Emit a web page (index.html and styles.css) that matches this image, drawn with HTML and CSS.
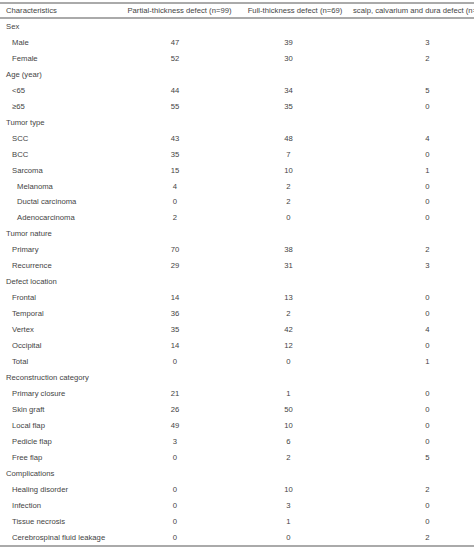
FILE: index.html
```html
<!DOCTYPE html>
<html>
<head>
<meta charset="utf-8">
<link rel="stylesheet" href="styles.css">
</head>
<body>
<table class="data">
<colgroup><col class="c1"><col class="c2"><col class="c3"><col class="c4"></colgroup>
<thead>
<tr><th class="lbl">Characteristics</th><th class="num">Partial-thickness defect (n=99)</th><th class="num">Full-thickness defect (n=69)</th><th class="last">scalp, calvarium and dura defect (n=10)</th></tr>
</thead>
<tbody>
<tr><td class="lbl">Sex</td><td></td><td></td><td></td></tr>
<tr><td class="lbl i1">Male</td><td class="v2">47</td><td class="v3">39</td><td class="v4">3</td></tr>
<tr><td class="lbl i1">Female</td><td class="v2">52</td><td class="v3">30</td><td class="v4">2</td></tr>
<tr><td class="lbl">Age (year)</td><td></td><td></td><td></td></tr>
<tr><td class="lbl i1">&lt;65</td><td class="v2">44</td><td class="v3">34</td><td class="v4">5</td></tr>
<tr><td class="lbl i1">≥65</td><td class="v2">55</td><td class="v3">35</td><td class="v4">0</td></tr>
<tr><td class="lbl">Tumor type</td><td></td><td></td><td></td></tr>
<tr><td class="lbl i1">SCC</td><td class="v2">43</td><td class="v3">48</td><td class="v4">4</td></tr>
<tr><td class="lbl i1">BCC</td><td class="v2">35</td><td class="v3">7</td><td class="v4">0</td></tr>
<tr><td class="lbl i1">Sarcoma</td><td class="v2">15</td><td class="v3">10</td><td class="v4">1</td></tr>
<tr><td class="lbl i2">Melanoma</td><td class="v2">4</td><td class="v3">2</td><td class="v4">0</td></tr>
<tr><td class="lbl i2">Ductal carcinoma</td><td class="v2">0</td><td class="v3">2</td><td class="v4">0</td></tr>
<tr><td class="lbl i2">Adenocarcinoma</td><td class="v2">2</td><td class="v3">0</td><td class="v4">0</td></tr>
<tr><td class="lbl">Tumor nature</td><td></td><td></td><td></td></tr>
<tr><td class="lbl i1">Primary</td><td class="v2">70</td><td class="v3">38</td><td class="v4">2</td></tr>
<tr><td class="lbl i1">Recurrence</td><td class="v2">29</td><td class="v3">31</td><td class="v4">3</td></tr>
<tr><td class="lbl">Defect location</td><td></td><td></td><td></td></tr>
<tr><td class="lbl i1">Frontal</td><td class="v2">14</td><td class="v3">13</td><td class="v4">0</td></tr>
<tr><td class="lbl i1">Temporal</td><td class="v2">36</td><td class="v3">2</td><td class="v4">0</td></tr>
<tr><td class="lbl i1">Vertex</td><td class="v2">35</td><td class="v3">42</td><td class="v4">4</td></tr>
<tr><td class="lbl i1">Occipital</td><td class="v2">14</td><td class="v3">12</td><td class="v4">0</td></tr>
<tr><td class="lbl i1">Total</td><td class="v2">0</td><td class="v3">0</td><td class="v4">1</td></tr>
<tr><td class="lbl">Reconstruction category</td><td></td><td></td><td></td></tr>
<tr><td class="lbl i1">Primary closure</td><td class="v2">21</td><td class="v3">1</td><td class="v4">0</td></tr>
<tr><td class="lbl i1">Skin graft</td><td class="v2">26</td><td class="v3">50</td><td class="v4">0</td></tr>
<tr><td class="lbl i1">Local flap</td><td class="v2">49</td><td class="v3">10</td><td class="v4">0</td></tr>
<tr><td class="lbl i1">Pedicle flap</td><td class="v2">3</td><td class="v3">6</td><td class="v4">0</td></tr>
<tr><td class="lbl i1">Free flap</td><td class="v2">0</td><td class="v3">2</td><td class="v4">5</td></tr>
<tr><td class="lbl">Complications</td><td></td><td></td><td></td></tr>
<tr><td class="lbl i1">Healing disorder</td><td class="v2">0</td><td class="v3">10</td><td class="v4">2</td></tr>
<tr><td class="lbl i1">Infection</td><td class="v2">0</td><td class="v3">3</td><td class="v4">0</td></tr>
<tr><td class="lbl i1">Tissue necrosis</td><td class="v2">0</td><td class="v3">1</td><td class="v4">0</td></tr>
<tr class="end"><td class="lbl i1">Cerebrospinal fluid leakage</td><td class="v2">0</td><td class="v3">0</td><td class="v4">2</td></tr>
</tbody>
</table>
</body>
</html>
```
FILE: styles.css
```css
html, body {
  margin: 0;
  padding: 0;
  background: #fff;
  overflow: hidden;
}
body {
  font-family: "Liberation Sans", Arial, sans-serif;
  font-size: 7.7px;
  color: #444;
}
.data {
  margin-top: 2px;
  border-collapse: separate;
  border-spacing: 0;
  table-layout: fixed;
  width: 503px;
}
.c1 { width: 121px; }
.c2 { width: 117px; }
.c3 { width: 114px; }
.c4 { width: 151px; }
th {
  font-weight: normal;
  height: 13px;
  padding: 0;
  line-height: 13px;
  white-space: nowrap;
  border-top: 2px solid #aaa;
  border-bottom: 2px solid #aaa;
  overflow: visible;
}
th.lbl { text-align: left; padding-left: 6px; }
th.num { text-align: center; }
th.last { text-align: left; padding-left: 1px; }
td {
  padding: 0;
  height: 15.95px;
  line-height: 15.95px;
  white-space: nowrap;
}
td.lbl { padding-left: 6px; }
td.i1 { padding-left: 12px; }
td.i2 { padding-left: 17px; }
td.v2 { text-align: center; padding-right: 9px; }
td.v3 { text-align: center; padding-right: 13px; }
td.v4 { text-align: center; }
tr.end td { border-bottom: 2px solid #aaa; }
```
